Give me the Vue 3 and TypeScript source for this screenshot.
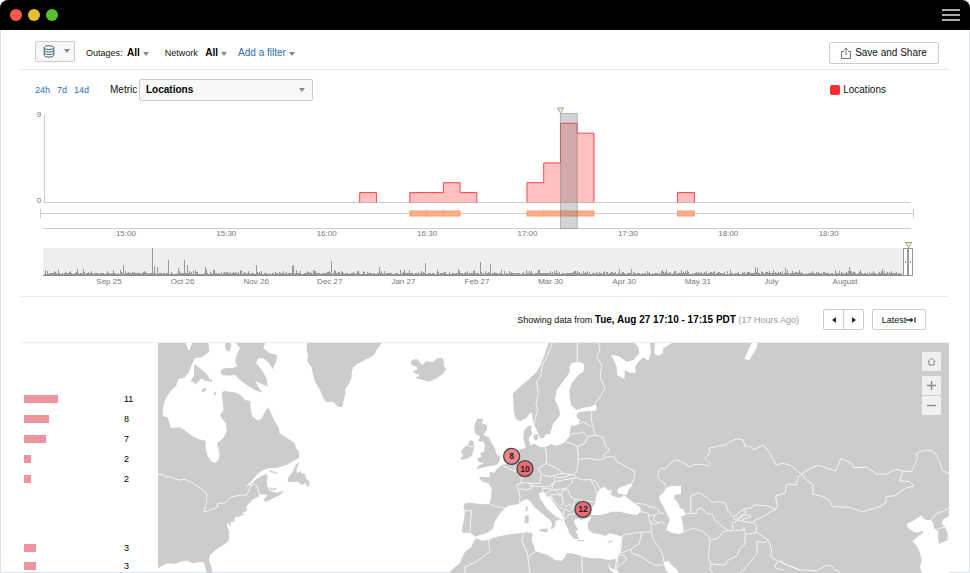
<script setup lang="ts">
import { ref } from 'vue'

interface Slot {
  minute: number
  value: number
}
interface Pin {
  x: number
  y: number
  count: number
  tone: string
}

const metric = ref('Locations')

const slots: Slot[] = [
  { minute: 970, value: 1 },
  { minute: 985, value: 1 },
  { minute: 990, value: 1 },
  { minute: 995, value: 2 },
  { minute: 1000, value: 1 },
  { minute: 1020, value: 2 },
  { minute: 1025, value: 4 },
  { minute: 1030, value: 8 },
  { minute: 1035, value: 7 },
  { minute: 1065, value: 1 },
]
const outages = [985, 990, 995, 1020, 1025, 1030, 1035, 1065]
const baseline = 98.5

const xAt = (minute: number): number => 506 + ((minute - 1020) * 100.4) / 30
const yAt = (value: number): number => baseline - value * 9.9
const slotWidth = 100.4 / 6

/* Outline of consecutive slots, open along the baseline */
function areaPath(): string {
  let d = ''
  slots.forEach((s, i) => {
    const prev = slots[i - 1]
    const next = slots[i + 1]
    if (!prev || prev.minute + 5 !== s.minute) d += `M${xAt(s.minute)} ${baseline}`
    d += `V${yAt(s.value)}H${xAt(s.minute + 5)}`
    if (!next || next.minute !== s.minute + 5) d += `V${baseline}`
  })
  return d
}

const hours = [900, 930, 960, 990, 1020, 1050, 1080, 1110].map((m) => ({
  x: xAt(m),
  label: `${Math.floor(m / 60)}:${String(m % 60).padStart(2, '0')}`,
}))

const months = ['Sep 25', 'Oct 26', 'Nov 26', 'Dec 27', 'Jan 27', 'Feb 27', 'Mar 30', 'Apr 30', 'May 31', 'July', 'August']
  .map((label, i) => ({ label, x: 88 + i * 73.6 }))

const spikes: [number, number][] = [
  [56, 6], [62, 6], [102, 10], [131, 27], [133, 9], [136, 8], [147, 15], [157, 7], [163, 15], [166, 10],
  [184, 8], [235, 10], [271, 9], [272, 10], [310, 14], [358, 8], [404, 12], [437, 6], [459, 13], [469, 11],
  [598, 6], [610, 6], [734, 8], [736, 7], [764, 7], [828, 8], [861, 6],
]

function historyPath(): string {
  let seed = 41
  let d = ''
  for (let x = 23; x < 881; x += 1) {
    seed = (seed * 1103515245 + 12345) % 2147483648
    const r = seed / 2147483648
    const h = r > 0.96 ? 5 : r > 0.9 ? 4 : r > 0.75 ? 3 : r > 0.25 ? 2 : 1
    d += `M${x + 0.5} 171v-${h}`
  }
  spikes.forEach(([x, h]) => {
    d += `M${x + 0.5} 171v-${h}`
  })
  return d
}

const area = areaPath()
const history = historyPath()

const groups = [
  { id: 'a', rows: [11, 8, 7, 2, 2].map((n, i) => ({ n, width: [34, 25, 22, 7, 7][i] })) },
  { id: 'b', rows: [3, 3].map((n) => ({ n, width: 12 })) },
]

const pins: Pin[] = [
  { x: 1535, y: 349, count: 8, tone: '#f0868f' },
  { x: 1575, y: 386, count: 10, tone: '#ec6c76' },
  { x: 1749, y: 508, count: 12, tone: '#ec6c76' },
]
</script>

<template>
  <div class="window">
    <header class="titlebar">
      <span class="dot red"></span>
      <span class="dot yellow"></span>
      <span class="dot green"></span>
      <button class="menu" type="button" aria-label="Menu">
        <span></span><span></span><span></span>
      </button>
    </header>

    <main class="content">
      <section class="toolbar">
        <button class="source" type="button" aria-label="Data source">
          <svg width="12" height="13" viewBox="0 0 12 13" fill="none" stroke="#3f6675">
            <ellipse cx="6" cy="2.6" rx="4.8" ry="1.9" />
            <path d="M1.2 2.6v7.6c0 1 2.1 1.9 4.8 1.9s4.8-.9 4.8-1.9V2.6M1.2 5.2c0 1 2.1 1.8 4.8 1.8s4.8-.8 4.8-1.8M1.2 7.7c0 1 2.1 1.8 4.8 1.8s4.8-.8 4.8-1.8" />
          </svg>
          <i class="caret"></i>
        </button>
        <button class="filter outages" type="button">Outages: <b>All</b><i class="caret"></i></button>
        <button class="filter network" type="button">Network <b>All</b><i class="caret"></i></button>
        <button class="filter add" type="button">Add a filter<i class="caret"></i></button>
        <button class="box share" type="button">
          <svg width="10" height="12" viewBox="0 0 10 12" fill="none" stroke="#777">
            <path d="M3 4.5H.5v7h9v-7H7M5 8V1M3 3l2-2 2 2" />
          </svg>
          Save and Share
        </button>
      </section>

      <section class="metrics">
        <nav class="ranges">
          <a href="#24h">24h</a>
          <a href="#7d">7d</a>
          <a href="#14d">14d</a>
        </nav>
        <label class="metric" for="metric">Metric</label>
        <span class="picker">
          <select id="metric" v-model="metric">
            <option>Locations</option>
          </select>
          <i class="caret"></i>
        </span>
        <span class="legend"><i class="swatch"></i>Locations</span>
      </section>

      <svg class="chart" viewBox="0 0 928 192" role="img" aria-label="Locations over time">
        <g class="tick">
          <text x="18" y="13">9</text>
          <text x="18" y="99">0</text>
        </g>
        <path class="axis" d="M23.5 11V98M22 98.5H890M22 124.5H890M19 109.5H892M19.5 105v9M892.5 105v9" />
        <rect v-for="m in outages" :key="m" class="outage" :x="xAt(m)" y="107" :width="slotWidth" height="5" />
        <path class="area" :d="area" />
        <rect class="selection" :x="xAt(1030)" y="9.5" :width="slotWidth" height="115" />
        <path class="flag" d="M536.5 4h6l-3 5z" />
        <g class="tick">
          <text v-for="h in hours" :key="h.label" :x="h.x + 0.5" y="132">{{ h.label }}</text>
        </g>
        <rect x="22" y="144" width="860" height="28" fill="#eee" />
        <path class="history" :d="history" />
        <path class="floor" d="M22 171.5H882" />
        <g class="handles">
          <rect x="882.5" y="144.5" width="4" height="27" />
          <rect x="887.5" y="144.5" width="4" height="27" />
          <path d="M884.5 157v2M889.5 157v2" />
        </g>
        <path class="flag" d="M884.5 138.5h6l-3 5z" />
        <g class="tick">
          <text v-for="m in months" :key="m.label" :x="m.x" y="180">{{ m.label }}</text>
        </g>
      </svg>

      <section class="period">
        <p>Showing data from <b>Tue, Aug 27 17:10 - 17:15 PDT</b> <span>(17 Hours Ago)</span></p>
        <div class="steps">
          <button type="button" aria-label="Previous">
            <svg width="4" height="6" viewBox="0 0 4 6"><path d="M4 0v6L0 3z" fill="#123246" /></svg>
          </button>
          <button type="button" aria-label="Next">
            <svg width="4" height="6" viewBox="0 0 4 6"><path d="M0 0v6l4-3z" fill="#123246" /></svg>
          </button>
        </div>
        <button class="box latest" type="button">
          Latest<svg width="10" height="6" viewBox="0 0 10 6"><path d="M0 2.3h4.5V.5L7.5 3l-3 2.5V3.7H0zM8.3.5h1.3v5H8.3z" fill="#123246" /></svg>
        </button>
      </section>

      <section class="lower">
        <div class="counts">
          <ul v-for="g in groups" :key="g.id" :class="g.id">
            <li v-for="(r, i) in g.rows" :key="i">
              <span class="track"><span class="bar" :style="{ width: r.width + 'px' }"></span></span>
              <span>{{ r.n }}</span>
            </li>
          </ul>
        </div>

        <div class="map">
          <svg viewBox="474 9 2373 690" role="img" aria-label="Affected locations">
            <!-- North America -->
            <g class="land">
              <path d="M474 9H557L566 34L577 9H625L628 35L605 52L585 54L575 75L565 100L555 112L535 118L528 138L510 155L495 180L489 205L488 228L503 232L513 264L540 262L560 275L580 290L597 298L617 302V325L622 345L632 362L645 370L655 360L659 345L655 325L650 310L662 302L672 290L680 275L678 250L665 235L660 225L671 210L668 185L665 160L672 152L690 155L710 158L725 168L735 180L750 183L752 205L757 230L773 241L785 236L795 215L805 202L815 225L825 245L837 265L838 278L862 295L885 310L888 325L898 335L896 355L885 360L860 375L830 383L805 385L785 392L770 405L755 422L738 440L750 435L765 420L785 407L800 402L803 412L800 425L803 440L810 452L830 458L852 453L840 465L820 475L795 487L792 478L803 465L780 463L775 470L760 477L745 492L738 502L742 512L725 520L735 523L715 530L705 532L703 545L692 547L690 560L683 547L680 555L688 575L686 603L670 615L650 628L630 645L627 660L635 685L638 699H620L615 680L612 668L600 665L580 670L560 662L540 665L525 672L505 670L490 675L474 685Z" />
              <path d="M583 72L600 85L615 97L625 108L628 120L637 118L635 125L615 122L605 115L595 125L585 133L580 125L572 125L582 105ZM605 150L612 143L620 145L615 155H605ZM642 158L648 155V166L642 165ZM677 9H692L694 20L688 35L677 30L675 20ZM708 9H795L790 25L810 40L832 45L830 60L818 88L808 70L790 55L775 55L768 68L785 90L800 115L803 140L780 130L765 122L775 140L787 158L765 150L740 135L720 120L705 105L690 107L665 105L662 92L672 85L700 83L712 78L705 65L710 45L720 25Z" />
              <path d="M899 366L890 385V400L903 393V400L915 402L918 415L928 425V438L920 440L918 428L905 435L895 425L863 427L865 412L878 395L887 375ZM808 389L832 399L834 403L812 396ZM808 440L818 446L830 443L826 451L812 450Z" />
            </g>
            <path class="border" d="M474 403L484 405L487 400L492 407L520 414L535 420L555 418L580 430L595 440L612 452L620 462V485L617 500L611 513L620 515L635 508L652 502L653 490L670 490L678 487L695 470L720 466L740 465L750 445L757 432L768 435L773 445L778 465" />

            <!-- Greenland and Iceland -->
            <g class="land" transform="translate(900)">
              <path d="M22 9H245L230 30L222 45L205 55L170 73L160 82L155 95V112L148 130L135 148L137 160L130 185L127 201H115L100 186L77 185L68 170L60 150L45 125L38 100L35 82L22 65L24 45L20 30ZM332 72L335 60L350 57L358 65L367 75L380 62L388 66L400 65L412 55L428 54L432 65L430 75L439 88L428 102L410 115L388 125L370 120L348 115L350 110L360 107L340 97V92L352 90L350 80L340 77Z" />
            </g>

            <!-- Europe and North Africa -->
            <g transform="translate(1320)">
              <g class="land">
                <path d="M90 300L100 303L102 320L97 345L85 355L63 360L62 355L70 345L63 335L70 325L82 315ZM112 236H130L125 250L142 255L140 270L130 285L148 293L155 310L165 325L168 340L180 350L178 365L170 375L150 378L125 383L108 388L117 376L132 370L115 365L112 355L125 350L120 340L132 335L135 315L130 305L115 303L120 290L105 280L103 265L105 250Z" />
                <path d="M325 9L317 35L303 72L290 95L270 115L240 140L219 160L220 190L222 220L228 238L240 243L258 235L270 220L276 217L278 240L285 260L292 275L300 293L310 295L318 283L330 282L335 265L340 250L350 240L360 225L358 210L345 180L350 150L365 130L380 110L390 95L388 80L395 70L410 65L425 68L433 75L430 95L415 105L395 130L388 150L390 175L393 195L410 210L430 203L450 200L467 192L470 203L468 212L440 214L415 217L410 225L412 235L420 240L415 252L405 258L395 255L390 270L388 290L375 305L370 310L345 318L335 312L318 320L300 322L285 312L270 315V308L266 300L268 290L277 281L273 273L275 256L262 260L252 272L250 295L255 312L256 325L240 328L235 345L215 355L205 370L185 375L170 388L163 398L150 395L148 412L120 410L118 415L128 425L145 430L155 445L153 475L148 492L130 493L90 488L75 490L70 500L75 515L72 540L67 560V578H85L93 580L105 590L120 585L140 580L160 565L162 550L180 520L195 505L205 497L235 492L250 480L262 478L272 485L282 500L305 520L330 540L337 553L332 568L340 565L347 553L346 543L360 538L366 545L368 540L350 530L335 520L320 505L310 490L300 475L297 460L310 457L318 460L320 470L330 468L337 482L350 500L365 520L370 535L375 550L383 563L388 580L403 598L415 597L412 580L405 573L415 570L403 550L402 540L413 535L425 540L445 533L455 530L450 540L443 550L445 570L460 580L480 582L495 588L510 580L530 585L545 590L546 605L544 625L540 640L530 657L505 660L480 655L450 655L430 650L415 645L395 640L380 640L372 655L365 662L345 660L325 645L305 640L285 633L283 620L275 600L278 580L260 577L240 580L210 583L170 590L145 600L125 602L110 595L100 605L95 620L75 635L65 655L60 670L40 685L28 699H1527V9Z" />
                <path d="M281 285L293 283L295 295L288 302L280 295ZM297 568L323 565L322 578L300 574ZM255 528L266 525V548L253 550ZM258 500L263 498L262 515L256 512ZM412 599L432 601V604L412 603ZM503 605L520 599L515 606L506 608Z" />
              </g>
              <path class="border" d="M85 308V318L100 320M337 9L325 40L307 75L302 110L290 125L295 160L288 190L293 210L285 235L284 250M412 9V65M475 9L480 30L470 50L485 75L480 110L495 145L480 170L465 190M455 215V245L460 260L465 285L490 292L495 315L508 330L490 345L491 352M415 252L430 245L455 260M388 283L430 278L442 290L465 285M442 290L435 310L412 320L400 312L375 305M412 320L415 350L412 358L440 355L480 360L505 350L523 350L530 365L560 380L585 395L582 415L575 430L560 435M315 320L320 345L318 370L345 382L370 400L400 405L410 395L415 360M320 370L295 385L305 405L330 410L345 405L370 400M303 408L300 430L265 430M340 425L330 440L300 440L270 437M230 435L250 427L270 430L275 445L255 450L243 446L236 453ZM225 390L240 398L250 402L243 425L235 435M236 453L240 470L238 492M190 378L205 385L225 395V380M148 492L170 500L195 505M75 512H95L92 540L90 575M345 425L370 420L400 415L395 430L380 445L345 450L335 440ZM335 440L345 425L342 415L345 405M345 412L370 413L400 402L408 413L400 415M385 450L392 470L405 478L430 482L462 485M408 413L430 420L450 418L465 440L468 458L475 458M450 418L470 425L478 445M308 457V445L335 447M315 462L335 450L345 450L365 465L330 463L340 480L358 500L370 490L365 465L368 450L385 450M405 478L400 500L410 515L430 530L455 520M370 490L378 500L390 493L397 505L388 515L375 505L370 520L372 540L385 525L410 520M358 500L370 510M145 600L150 635L130 650L110 665L75 680V699M250 580L245 600L262 640L270 699M285 635L265 650M425 650L427 699M530 657L525 690" />
            </g>

            <!-- Inland seas, Central Asia and the Middle East -->
            <g transform="translate(1800)">
              <path class="water" d="M-28 525L-25 505L-15 490L-12 468L0 446L15 440L22 450L37 452L30 463L45 470L60 474L72 466L90 480L105 490L122 503V515L110 525L90 522L60 515L35 515L15 522L0 525ZM52 448L65 440L95 432L97 436L85 450L80 465L65 463L53 460ZM198 445L215 437L243 438V462L225 465L222 475L235 490L240 505L250 508L258 525L243 530L247 545L250 560V578L235 582L215 578L198 570L205 550L210 540L200 520L190 500L178 478V468L190 458ZM34 45L55 48L80 65L100 60L118 40L115 20L103 9H150L153 35L145 62L130 52L115 65L105 80L108 100L90 98L75 90L73 118L52 105L50 80ZM165 9H215L190 25L188 40L175 48L162 40ZM455 9H473L470 25L448 60L433 57L440 40ZM190 665L205 663L215 675L232 690L235 699H205L195 685ZM23 668L33 685L50 690L58 699H42L30 690Z" />
              <path class="border" d="M197 445L195 432L180 420L172 412L178 390L185 383L195 388L210 370L225 360L240 362L255 372L270 380L285 373L310 374L325 378L332 372L315 355L325 345L330 335L326 325L355 318L375 315L400 300L415 296L430 300L435 320L450 318L460 330L490 315L510 340L528 375L545 370L560 373L575 378L590 392L605 402L595 410L588 435L560 432L555 460L528 467V480L532 495L528 507L500 497L460 495L455 503L430 508L410 525L400 530L385 515L375 488L350 485L335 488L320 472L298 458L272 468V520M258 520H290L292 508L305 503L318 520L335 522L345 540L365 558L385 572L370 575L355 595L330 600L325 588L305 573L280 565L250 575M330 600L328 625L325 650L332 672L375 675L385 660L410 648L420 625L435 612V585L445 582L470 578M332 672L330 690L340 699M385 572L400 572L397 550L415 540L430 545L460 548L470 560L468 575L475 580L490 590L505 600L515 630L512 650L535 665L525 675L527 685L550 690M535 663L560 675L600 690M505 598L495 608L470 605L472 640L460 655L440 680L420 699M405 572L430 570L432 562L437 583M400 530L405 540L430 523L440 515L430 510M415 540L430 525L450 525L452 532L430 536V545M528 507L505 520L490 530L465 540L460 548M108 490L130 492L150 500L170 505L180 520L193 520M122 515L140 518L150 527L165 525L175 520M145 525L150 545L165 555L185 543L195 555M165 525L160 540L178 550M150 545L155 560L152 575L110 578L70 585L60 600M155 575L160 600L180 625L190 650V665M125 578L118 610L92 628L60 640M92 628L96 640L120 648L145 665L165 675L190 675M68 588L55 635L50 690M60 645L75 648L80 660L55 680" />
            </g>

            <!-- East Asia -->
            <g transform="translate(2340)">
              <path class="water" d="M380 552L400 542L425 526L430 535L440 540L455 540L475 550L507 525V699H425L420 680L425 660L420 640L412 620L397 603L410 592L430 578L428 572L412 578L400 575L385 565Z" />
              <path class="land" d="M453 540L475 517L507 500V527L490 538L485 550L497 565L503 580V600L478 611L474 595L475 572L462 565L460 550Z" />
              <path class="border" d="M453 540L475 517L490 515L507 503M472 566L493 562M65 402L90 385L115 376L135 383L165 393L175 375L183 355L215 370L220 383L260 382L290 402L320 402L348 388L370 393L395 395C402 378 408 368 412 355L408 342C425 328 455 326 465 340C476 355 480 372 487 392L507 400M65 402L80 420L100 435L98 462L130 470L148 482L157 500L205 502L248 515L300 500L318 487V470L345 467L375 445L402 438L390 425L358 422L370 393M0 660L20 675L60 690L80 690L110 693L140 675L155 678L165 690L180 695" />
            </g>

            <g v-for="p in pins" :key="p.count" class="pin">
              <circle :cx="p.x" :cy="p.y" r="24" :fill="p.tone" />
              <text :x="p.x" :y="p.y + 9">{{ p.count }}</text>
            </g>
          </svg>

          <div class="controls">
            <button type="button" aria-label="Reset view">
              <svg width="9" height="9" viewBox="0 0 9 9" fill="none" stroke="#888"><path d="M1 4.5L4.5 1 8 4.5H7V8H2V4.5z" /></svg>
            </button>
            <button class="plus" type="button" aria-label="Zoom in">
              <svg width="9" height="9" viewBox="0 0 9 9" stroke="#888" stroke-width="1.4"><path d="M4.5 0v9M0 4.5h9" /></svg>
            </button>
            <button type="button" aria-label="Zoom out">
              <svg width="9" height="9" viewBox="0 0 9 9" stroke="#888" stroke-width="1.4"><path d="M0 4.5h9" /></svg>
            </button>
          </div>
        </div>
      </section>
    </main>
  </div>
</template>

<style>
body {
  margin: 0;
  background: #fff;
}
</style>

<style scoped>
.window {
  box-sizing: border-box;
  min-height: 100vh;
  border: 1px solid #dde1ea;
  border-top: 0;
  border-radius: 8px 8px 0 0;
  background: #fff;
  color: #111;
  font-family: "Liberation Sans", Arial, sans-serif;
  font-size: 10px;
  line-height: 12px;
}

.window button,
.window select {
  margin: 0;
  font: inherit;
  color: inherit;
  cursor: pointer;
}

.titlebar {
  display: flex;
  align-items: center;
  gap: 6px;
  height: 30px;
  margin: 0 -1px;
  padding: 0 10px;
  border-radius: 8px 8px 0 0;
  background: #000;
}

.dot {
  width: 12px;
  height: 12px;
  border-radius: 50%;
}

.red {
  background: #ff5a52;
}

.yellow {
  background: #e6c02a;
}

.green {
  background: #53c22c;
}

.menu {
  display: flex;
  flex-direction: column;
  gap: 3px;
  padding: 0;
  border: 0;
  background: none;
}

.window .menu {
  margin-left: auto;
}

.menu span {
  width: 18px;
  height: 2px;
  background: #aaa;
}

.content {
  padding: 0 20px;
}

.caret {
  display: inline-block;
  border: 3px solid transparent;
  border-top: 4px solid #888;
  border-bottom: 0;
}

.toolbar {
  display: flex;
  align-items: center;
  height: 40px;
  padding: 6px 10px 0 14px;
  box-sizing: border-box;
  border-bottom: 1px solid #e6e6e6;
}

.source {
  display: flex;
  align-items: center;
  justify-content: space-between;
  box-sizing: border-box;
  width: 40px;
  height: 21px;
  padding: 0 4px 0 7px;
  border: 1px solid #ccc;
  border-radius: 2px;
  background: #f8f8f8;
}

.window .source {
  margin-bottom: 3px;
}

.filter {
  padding: 0;
  border: 0;
  background: none;
  white-space: pre;
}

.filter .caret {
  margin-left: 3px;
}

.window .outages,
.window .network {
  font-size: 9px;
}

.outages b,
.network b {
  color: #000;
  font-size: 10px;
}

.window .outages {
  margin-left: 11px;
}

.outages b {
  margin-left: 2px;
}

.window .network {
  margin-left: 16px;
}

.network b {
  margin-left: 5px;
}

.window .add {
  margin-left: 11px;
  color: #2a6cb0;
}

.box {
  display: flex;
  align-items: center;
  justify-content: center;
  box-sizing: border-box;
  border: 1px solid #ccc;
  border-radius: 2px;
  background: #fff;
}

.share {
  gap: 4px;
  width: 110px;
  height: 22px;
  padding: 0;
}

.window .share {
  margin-left: auto;
}

.metrics {
  display: flex;
  align-items: center;
  height: 34px;
  padding: 6px 63px 0 14px;
  box-sizing: border-box;
}

.ranges {
  display: flex;
  gap: 7px;
  width: 75px;
  font-size: 9px;
}

.ranges a {
  color: #2a6cb0;
  text-decoration: none;
}

.metric {
  width: 29px;
}

.picker {
  position: relative;
}

.picker select {
  display: block;
  box-sizing: border-box;
  width: 174px;
  height: 22px;
  padding: 0 20px 0 6px;
  border: 1px solid #ccc;
  border-radius: 2px;
  background: #f8f8f8;
  color: #000;
  font-weight: bold;
  appearance: none;
}

.picker .caret {
  position: absolute;
  top: 9px;
  right: 8px;
  pointer-events: none;
}

.legend {
  display: flex;
  align-items: center;
  gap: 3px;
  margin-left: auto;
}

.swatch {
  width: 10px;
  height: 10px;
  border-radius: 2px;
  background: #fb2c33;
}

.chart {
  display: block;
  width: 100%;
  border-bottom: 1px solid #ebebeb;
}

.tick {
  fill: #777;
  font-size: 8px;
}

.tick text {
  text-anchor: middle;
}

.axis {
  fill: none;
  stroke: #ccc;
}

.area {
  fill: rgba(255, 60, 60, 0.32);
  stroke: #f9444c;
}

.outage {
  fill: #ffb088;
  stroke: #f79a6c;
}

.selection {
  fill: rgba(120, 120, 120, 0.33);
  stroke: rgba(130, 130, 130, 0.5);
}

.flag {
  fill: #ffffc8;
  stroke: #999;
}

.history {
  stroke: #999;
  shape-rendering: crispEdges;
}

.floor {
  stroke: #888;
}

.handles {
  fill: #fff;
  stroke: #999;
}

.period {
  display: flex;
  align-items: center;
  justify-content: flex-end;
  box-sizing: border-box;
  height: 46px;
  padding-right: 23px;
  border-bottom: 1px solid #ececec;
}

.period p {
  margin: 0 24px 0 0;
  font-size: 9px;
}

.period p b {
  color: #000;
  font-size: 10px;
}

.period p span {
  color: #999;
}

.steps {
  display: flex;
  box-sizing: border-box;
  width: 41px;
  height: 21px;
  border: 1px solid #ccc;
  border-radius: 2px;
}

.steps button {
  display: grid;
  flex: 1;
  place-items: center;
  padding: 0;
  border: 0;
  background: none;
}

.steps button + button {
  border-left: 1px solid #ccc;
}

.latest {
  width: 54px;
  height: 21px;
  padding: 0;
}

.window .latest {
  margin-left: 8px;
  font-size: 9px;
}

.lower {
  display: grid;
  grid-template-columns: 137px 1fr;
  margin-bottom: -1px;
}

.counts {
  padding: 51px 0 0 3px;
  color: #000;
  font-size: 9px;
  line-height: 10px;
}

.counts ul {
  display: grid;
  gap: 10px;
  margin: 0;
  padding: 0;
  list-style: none;
}

.counts .b {
  gap: 8px;
  margin-top: 59px;
}

.counts li {
  display: flex;
  align-items: center;
}

.track {
  width: 100px;
}

.bar {
  display: block;
  height: 8px;
  background: #ed949f;
}

.map {
  position: relative;
  overflow: hidden;
}

.map > svg {
  display: block;
  width: 100%;
}

.land {
  fill: #ccc;
}

.water {
  fill: #fff;
}

.border {
  fill: none;
  stroke: #f5f5f5;
  stroke-width: 3;
  stroke-linejoin: round;
}

.pin circle {
  stroke: #444;
  stroke-width: 4;
}

.pin text {
  fill: #222;
  font-size: 26px;
  font-weight: bold;
  text-anchor: middle;
}

.controls {
  position: absolute;
  top: 9px;
  right: 8px;
  display: grid;
  gap: 1px;
}

.controls button {
  display: grid;
  place-items: center;
  width: 19px;
  height: 19px;
  padding: 0;
  border: 0;
  border-radius: 1px;
  background: #f0f0f0;
}

.controls .plus {
  margin-top: 4px;
}
</style>
